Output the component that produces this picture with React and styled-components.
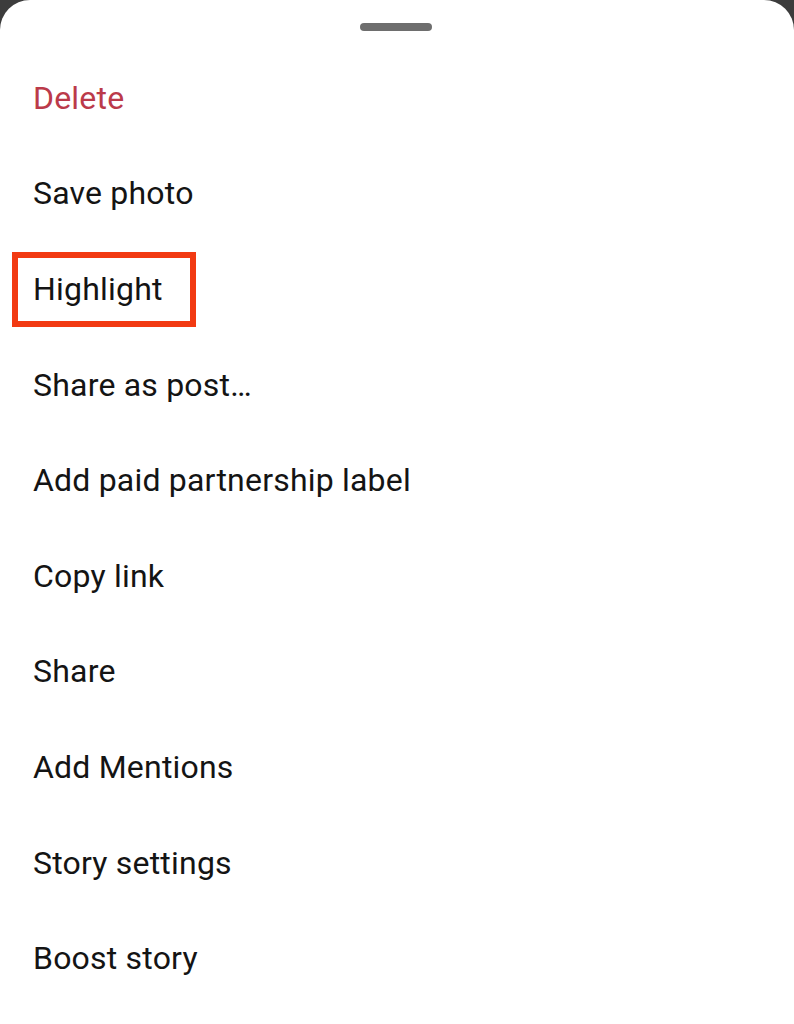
import React from 'react';
import styled, { createGlobalStyle } from 'styled-components';

const GlobalStyle = createGlobalStyle`
  html, body {
    margin: 0;
    padding: 0;
    background: #3c3c3c;
  }
  body {
    font-family: Roboto, "Noto Sans", "Liberation Sans", sans-serif;
    -webkit-font-smoothing: antialiased;
  }
`;

const Sheet = styled.div`
  width: 794px;
  min-height: 1024px;
  background: #ffffff;
  border-radius: 30px 30px 0 0;
  box-sizing: border-box;
  padding-top: 50px;
  position: relative;
`;

const Handle = styled.div`
  position: absolute;
  top: 23px;
  left: 360px;
  width: 72px;
  height: 8px;
  border-radius: 4px;
  background: #6e6e6e;
`;

const Menu = styled.ul`
  list-style: none;
  margin: 0;
  padding: 0;
`;

const Item = styled.li`
  position: relative;
  height: 95.6px;
  display: flex;
  align-items: center;
  padding-left: 33px;
  font-size: 32px;
  letter-spacing: 0.2px;
  color: ${({ $danger }) => ($danger ? '#bb3a4a' : '#141414')};

  ${({ $marked }) =>
    $marked &&
    `
    &::after {
      content: '';
      position: absolute;
      left: 12px;
      top: 11px;
      width: 184px;
      height: 75px;
      box-sizing: border-box;
      border: 6px solid #f23a12;
    }
  `}
`;

const items = [
  { label: 'Delete', danger: true },
  { label: 'Save photo' },
  { label: 'Highlight', marked: true },
  { label: 'Share as post…' },
  { label: 'Add paid partnership label' },
  { label: 'Copy link' },
  { label: 'Share' },
  { label: 'Add Mentions' },
  { label: 'Story settings' },
  { label: 'Boost story' },
];

export default function App() {
  return (
    <>
      <GlobalStyle />
      <Sheet>
        <Handle />
        <Menu>
          {items.map((it) => (
            <Item key={it.label} $danger={it.danger} $marked={it.marked}>
              {it.label}
            </Item>
          ))}
        </Menu>
      </Sheet>
    </>
  );
}
